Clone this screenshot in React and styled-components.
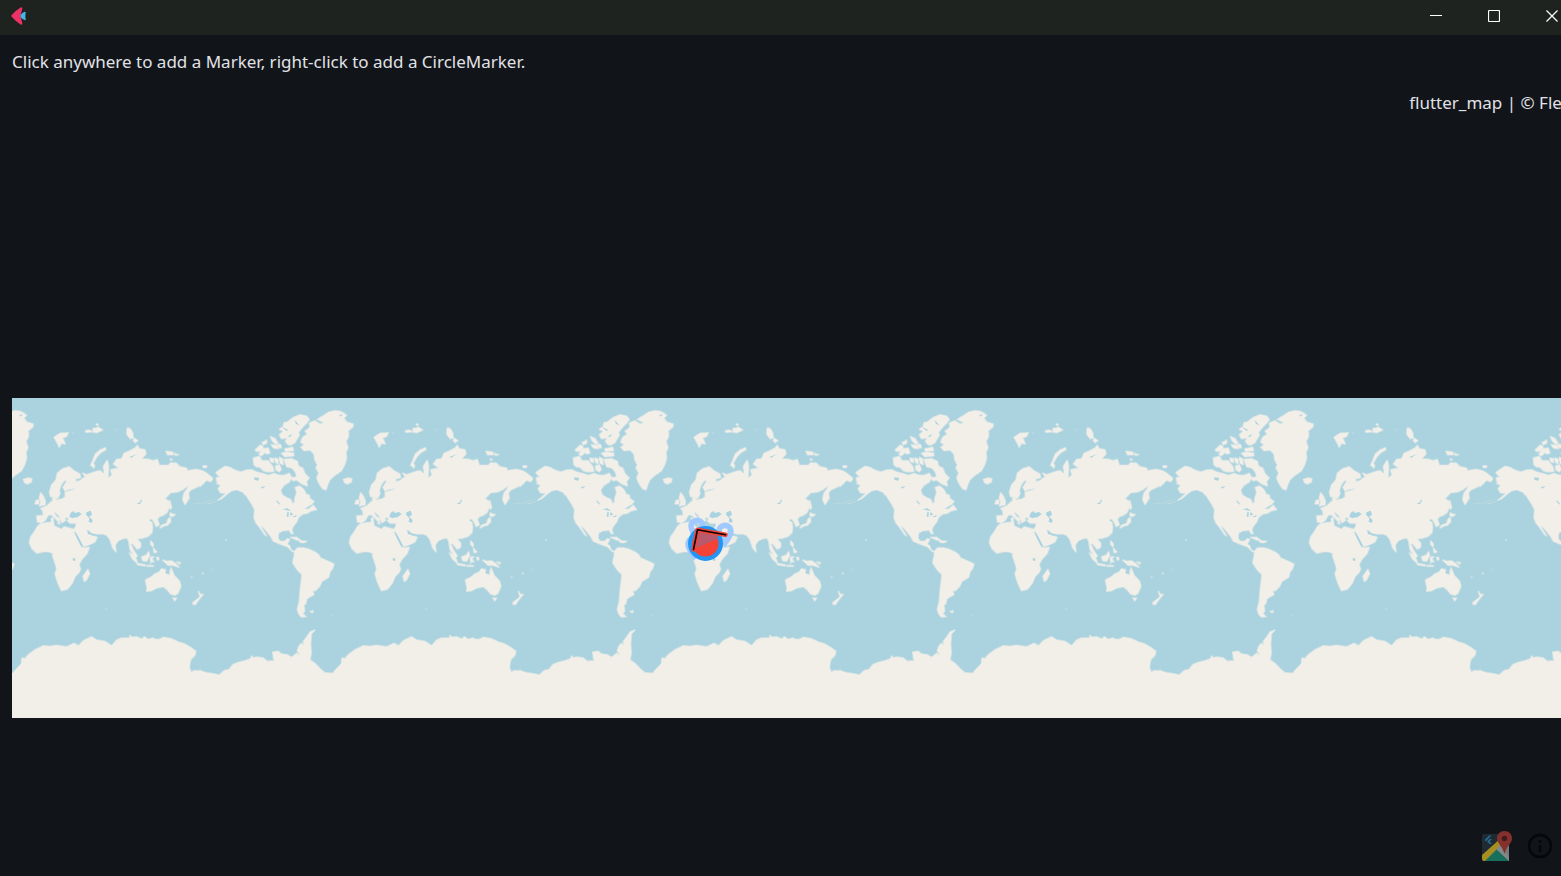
import React from 'react'
import styled, { createGlobalStyle } from 'styled-components'

const GlobalStyle = createGlobalStyle`
  * {
    box-sizing: border-box;
  }

  body {
    margin: 0;
    background: #111418;
    color: #e1e2e8;
    font-family: 'Noto Sans', 'Open Sans', sans-serif;
  }
`

const Window = styled.div`
  display: flex;
  flex-direction: column;
  min-height: 100vh;
  overflow: hidden;
`

const TitleBar = styled.header`
  display: flex;
  align-items: center;
  justify-content: space-between;
  height: 35px;
  padding-left: 10px;
  background: #1e231f;
`

const Logo = styled.svg`
  display: block;
  width: 18px;
  height: 20px;
  margin-bottom: 4px;
`

const WindowButtons = styled.div`
  display: flex;
  margin-right: -20px;
`

const WindowButton = styled.button`
  display: flex;
  align-items: center;
  justify-content: center;
  width: 58px;
  height: 35px;
  padding: 0 0 4px;
  border: 0;
  background: none;
  color: #fff;
`

const Content = styled.main`
  display: flex;
  flex: 1;
  flex-direction: column;
  padding: 12px 0 0 12px;
`

const Text = styled.p`
  margin: 0 0 12px;
  font-size: 17px;
  line-height: 29px;
  white-space: nowrap;
`

const Attribution = styled(Text)`
  align-self: flex-end;
  margin: 0 -7px 0 0;
`

const MapArea = styled.section`
  display: flex;
  flex: 1;
  flex-direction: column;
  justify-content: flex-end;
`

const MapCanvas = styled.svg`
  display: block;
  width: 100%;
  height: 320px;
  background: #aad3df;
`

const Sources = styled.footer`
  display: flex;
  align-items: flex-end;
  justify-content: flex-end;
  gap: 15px;
  height: 158px;
  padding: 0 8px 15px;
`

const SourceButton = styled.button`
  display: flex;
  padding: 0;
  border: 0;
  background: none;
  color: #050709;
`

const LAND = '#f2efe9'
const WATER = '#aad3df'
const WORLD_WIDTH = 320
const worlds = [-1, 0, 1, 2, 3, 4]

const americas = [
  'M50,222L64,212L75,205L90,208L104,216L122,222L140,216L155,215L170,222L185,226L205,232L222,226L238,232L252,232L268,226L275,238L268,252L252,262L242,276L246,290L262,300L272,304L278,318L284,312L285,298L290,285L286,268L300,264L312,275L318,288L328,292L330,302L342,310L336,318L322,326L312,332L325,334L340,322L350,335L335,338L322,346L308,348L296,358L290,372L278,388L276,396L279,408L272,405L268,396L250,398L236,404L234,420L240,430L254,430L262,422L269,424L262,438L270,445L272,455L285,462L276,460L262,446L240,438L220,430L212,415L196,395L182,380L188,395L200,414L194,410L180,390L168,375L162,360L164,335L155,318L140,295L128,282L110,275L95,278L82,288L65,302L54,306L62,300L78,286L62,285L54,272L62,262L50,256L58,248L48,240L62,236Z',
  'M284,460L292,450L308,449L325,453L345,462L356,470L362,480L385,490L402,498L398,512L390,522L386,538L366,550L360,564L348,577L338,580L342,590L330,596L320,604L318,616L312,622L314,640L308,646L318,656L304,657L296,648L292,634L298,610L300,580L306,530L292,516L278,494L282,476Z',
  'M375,50L385,43L405,38L420,40L430,44L440,52L432,60L440,72L460,78L458,88L445,98L446,115L438,130L444,148L438,165L440,180L434,200L425,218L405,232L390,245L384,258L378,276L368,272L358,258L350,240L356,225L348,210L352,200L344,185L342,168L330,156L312,158L302,148L312,140L302,132L308,118L322,108L315,100L330,88L328,75L345,68L360,78L372,74L352,64Z',
  'M262,72L280,58L300,50L320,54L328,64L320,76L308,88L296,102L298,112L284,135L270,142L262,138L256,130L262,120L244,122L238,110L250,100L238,94L250,84L252,74Z',
  'M255,152L278,148L281,158L255,160Z M244,166L262,162L281,166L281,174L254,176Z M211,115L226,122L234,135L226,138L216,128Z M186,134L200,126L200,136L190,140Z M166,155L180,142L188,144L190,152L205,150L210,165L200,168L194,164L184,174L176,168L184,160L168,160Z',
  'M160,180L178,175L186,188L205,188L218,205L222,220L205,222L190,218L180,208L168,206L162,200Z M210,180L222,183L220,194L211,190Z M224,180L236,184L233,198L226,192Z M238,178L248,182L250,200L240,196Z M226,204L238,200L244,214L238,222L228,216Z M214,140L230,142L236,152L220,150Z M232,138L242,140L244,150L234,148Z',
  'M252,184L275,182L292,190L296,205L308,210L316,228L328,240L320,250L322,264L306,258L290,246L278,248L274,240L290,236L286,222L276,210L260,206L256,196Z',
  'M430,244L445,240L456,242L454,252L442,258L434,254Z M272,418L290,418L304,428L290,426Z M300,428L320,430L312,434L298,432Z M0,217L20,226L38,240L32,250L22,244L10,256L0,266Z M10,204h9v4h-9Z M330,641l10,-3l-2,6Z',
]

const eurasia = [
  'M-2,284L4,262L18,245L22,225L38,212L58,206L72,218L90,228L92,240L77,242L78,252L90,248L105,236L98,225L110,230L125,225L140,220L150,218L163,228L160,205L172,186L176,205L174,240L186,232L182,215L206,210L190,198L200,184L215,182L222,166L240,158L255,150L262,142L268,152L285,155L288,168L275,182L295,184L310,188L322,184L328,202L355,202L362,194L380,196L390,206L410,210L412,218L440,214L465,222L475,235L488,245L480,250L465,245L458,258L440,268L422,276L415,286L418,300L405,320L398,305L402,285L412,272L415,262L400,274L382,282L362,284L345,302L358,310L360,325L350,345L340,352L328,356L322,364L328,380L319,386L312,372L305,362L296,366L306,374L308,388L306,404L295,415L280,420L262,422L272,436L272,448L262,454L248,437L242,438L250,455L262,474L256,480L240,455L236,428L230,420L218,422L205,428L196,440L198,462L188,450L180,425L170,412L160,408L140,408L125,405L114,395L110,400L125,412L142,418L135,432L118,440L100,446L90,430L80,410L75,400L72,404L85,425L98,450L118,448L112,466L95,485L87,500L92,512L88,523L75,536L67,556L52,574L34,578L22,551L15,528L20,511L12,486L8,474L8,466L-5,461L-20,461L-40,466L-55,451L-62,434L-58,416L-45,398L-38,386L-28,376L-10,374L10,371L13,384L35,394L42,386L72,394L78,384L78,376L60,376L52,368L58,360L46,358L46,368L36,374L26,352L16,343L12,345L20,356L30,362L28,372L20,366L6,352L-4,350L-15,368L-25,374L-38,372L-40,354L-20,352L-22,338L-28,331L-10,324L0,314L8,308L8,296L14,298L20,306L38,302L46,296L45,282L62,278L78,270L60,274L44,278L39,268L50,250L45,246L35,258L28,276L30,288L22,302L12,296L2,296Z',
  'M166,149L150,156L136,168L128,188L122,202L132,210L134,204L130,196L140,178L152,164L168,155Z M12,118L30,106L55,104L50,115L38,120L46,138L34,136L28,148L22,136Z M232,90L241,92L248,104L250,120L240,122L230,108Z M252,120L264,128L256,134L250,128Z M106,98L118,96L128,102L108,103Z M128,92L146,88L158,96L140,104L130,102Z M138,78l6,0l0,6Z M348,160L368,162L370,170L352,170Z M372,166L386,170L376,172Z M360,184l6,-1v4Z M460,204h9v4h-9Z M510,218L498,224L504,232L510,236Z M500,242h10v8h-10Z',
  'M360,308L365,330L360,334Z M360,345L368,348L376,350L366,356L360,352Z M361,358L362,372L352,382L342,384L330,390L334,382L350,376L354,364Z M-28,284L-20,294L-14,308L-14,320L-32,324L-28,312L-32,298Z M-42,308L-32,304L-34,318L-45,318Z M114,514L119,528L108,548L102,550L99,534Z M22,374l9,0l-3,5Z M4,360l6,0l0,12l-5,0Z',
]

const oceania = [
  'M58,98L70,106L80,120L82,130L68,118Z M80,130L105,134L108,138L84,135Z M95,110L108,106L116,95L119,107L110,124L98,122Z M121,112L132,110L126,116L132,126L124,124L122,130Z M122,62L130,72L129,80L122,74Z M130,84L141,96L132,98Z M158,120L170,124L184,122L198,131L208,142L188,136L174,136L166,128Z M140,112l6,0l0,8l-4,0Z M112,136l18,1l0,2l-18,0Z M200,126l12,2l-4,4Z',
  'M106,180L122,172L134,162L148,156L154,146L167,149L165,160L178,166L183,143L188,155L194,168L208,182L213,198L204,220L195,226L182,222L172,210L160,200L140,204L125,212L110,214L111,202Z M189,234L200,235L194,243Z M265,214L270,222L280,224L272,232L266,240L256,254L248,252L250,246L262,238L270,230Z',
]

const antarctica =
  'M0,818L20,824L40,827L58,831L72,818L88,814L98,800L112,794L135,788L152,782L154,774L160,779L172,777L190,780L205,792L208,788L222,790L218,762L235,760L245,768L262,770L275,778L290,766L300,772L292,758L296,746L304,736L312,742L310,730L322,714L330,702L345,696L334,708L332,740L334,765L330,786L345,796L362,814L375,824L398,826L412,810L424,798L426,780L434,782L445,770L465,755L490,743L510,745L530,742L560,746L582,736L596,743L610,728L635,716L650,726L675,730L695,743L710,726L725,720L748,720L750,712L755,718L770,716L785,723L793,716L805,724L820,720L825,724L838,724L850,718L875,722L895,732L915,738L935,750L948,760L945,772L932,785L928,810L935,824L940,818L962,818V960H0Z'

const lakes = [
  'M570,350L574,342L582,340L586,346L596,341L605,349L592,358L576,360L568,356Z',
  'M620,342L632,338L636,350L628,356L638,366L636,374L626,372L628,360L618,350Z',
  'M583,402L588,404L597,420L610,445L604,446L592,424Z',
  'M622,397L636,408L648,409L640,413L624,408Z',
  'M770,318L780,312L784,304L786,308L780,318Z',
  'M578,481h8v7h-7Z',
  'M162,238l16,2l-4,8l-10,-2Z M182,268l16,-4l-12,8Z M228,308l5,0l8,12l-5,-2Z M248,334l14,-3l12,8l-14,-2Z M262,342l4,0l0,14l-6,0Z M270,342l10,6l-8,6Z M276,356l16,-5l-6,6Z',
  'M242,84L264,96L260,99Z M284,66L298,82L288,78Z M262,116l14,-8l-4,8Z M418,52l10,-4l-6,8Z M748,177l22,-8l-16,10Z',
]

const pins = [
  { x: 682, y: 515 },
  { x: 710, y: 520 },
  { x: 679, y: 533 },
]

const MapPin = ({ x, y }) => (
  <g transform={`translate(${x} ${y}) scale(1.25)`}>
    <path
      d="M12 2C8.13 2 5 5.13 5 9c0 5.25 7 13 7 13s7-7.75 7-13c0-3.87-3.13-7-7-7zm0 9.500a2.500 2.500 0 0 1 0-5 2.500 2.500 0 0 1 0 5z"
      fill="#a0c9ff"
    />
  </g>
)

const Coastline = () => (
  <>
    {americas.map((d, key) => <path key={key} d={d} />)}
    <g transform="translate(510 0)">
      {eurasia.map((d, key) => <path key={key} d={d} />)}
    </g>
    <g transform="translate(690 366)">
      {oceania.map((d, key) => <path key={key} d={d} />)}
    </g>
    <path d={antarctica} />
  </>
)

const WorldMap = () => (
  <MapCanvas role="img" aria-label="World map">
    <defs>
      <g id="coastline">
        <Coastline />
      </g>
      <g id="world" strokeLinejoin="round">
        {/* pale shallows round the coast */}
        <use href="#coastline" fill="none" stroke={LAND} strokeWidth="6" strokeOpacity="0.35" />
        <use href="#coastline" fill={LAND} stroke={LAND} strokeWidth="1" />
        {lakes.map((d, key) => <path key={key} d={d} fill={WATER} />)}
        <path d="M20,318Q48,314 64,302M404,302" fill="none" stroke={LAND} strokeWidth="3" strokeOpacity="0.35" />
        <path d="M938,318Q968,318 1000,304" fill="none" stroke={LAND} strokeWidth="2" strokeOpacity="0.35" />
        <g fill={LAND} opacity="0.5">
          <circle cx="78" cy="425" r="3" />
          <circle cx="38" cy="516" r="2" />
          <circle cx="8" cy="527" r="3" />
          <circle cx="395" cy="653" r="2" />
          <circle cx="679" cy="632" r="2" />
          <circle cx="935" cy="537" r="3" />
          <circle cx="969" cy="526" r="3" />
          <circle cx="580" cy="104" r="2" />
          <circle cx="706" cy="95" r="2" />
        </g>
      </g>
    </defs>
    {worlds.map(n => (
      <use key={n} href="#world" transform={`translate(${188 + n * WORLD_WIDTH} 0) scale(0.33333)`} />
    ))}
    {/* overlay layers share the window's coordinates */}
    <g transform="translate(-12 -398)">
      {pins.map((pin, key) => <MapPin key={key} {...pin} />)}
      <circle cx="705.500" cy="543.500" r="15.300" fill="#f44336" stroke="#2196f3" strokeWidth="4.400" />
      <path d="M697.500 530L718 536L717 539L694 549Z" fill="#b85a6c" />
      <g fill="none" strokeLinecap="round" strokeLinejoin="round">
        <path d="M725.500 534.700L697.500 529.700L693.500 549.500" stroke="#f44336" strokeWidth="4.600" />
        <path d="M725.500 534.700L697.500 529.700L693.500 549.500" stroke="#000" strokeWidth="1.600" />
      </g>
    </g>
  </MapCanvas>
)

const App = () => (
  <>
    <GlobalStyle />
    <Window>
      <TitleBar>
        <Logo viewBox="0 0 18 20" aria-hidden="true">
          <path d="M11 1.200Q13 1 12 4L10.500 10L12 16Q13 19 11 18.700Q6 16 1.500 10.600Q1 10 1.500 9.300Q6 4 11 1.200Z" fill="#ee3167" />
          <path d="M10 10L12 7.200Q15.500 5.200 15.700 6Q15 10 15.700 14Q15.500 14.800 12 12.800Z" fill="#45b5e5" />
        </Logo>
        <WindowButtons>
          <WindowButton type="button" aria-label="Minimize">
            <svg width="12" height="12" stroke="currentColor">
              <path d="M0 5.500H12" />
            </svg>
          </WindowButton>
          <WindowButton type="button" aria-label="Maximize">
            <svg width="12" height="12" fill="none" stroke="currentColor">
              <rect x="0.500" y="0.500" width="11" height="11" rx="1" strokeWidth="1.200" />
            </svg>
          </WindowButton>
          <WindowButton type="button" aria-label="Close">
            <svg width="12" height="12" stroke="currentColor" strokeWidth="1.200">
              <path d="M0.500 0.500L11.500 11.500M11.500 0.500L0.500 11.500" />
            </svg>
          </WindowButton>
        </WindowButtons>
      </TitleBar>
      <Content>
        <Text>Click anywhere to add a Marker, right-click to add a CircleMarker.</Text>
        <Attribution>flutter_map | © Flet</Attribution>
        <MapArea>
          <WorldMap />
        </MapArea>
        <Sources>
          <SourceButton type="button" aria-label="flutter_map">
            <svg width="30" height="30" viewBox="0 1 30 30">
              <rect y="4" width="27" height="27" rx="2" fill="#202a33" />
              <path d="M20 10H25Q27 10 27 12V31H25L15 20Z" fill="#777a7b" />
              <path d="M1 31L14.500 18L27 31Z" fill="#176f5c" />
              <path d="M0 25L19 8L22 12L3 31H2Q0 31 0 29Z" fill="#a88d20" />
              <path d="M14 19L18 15L27 27V31Z" fill="#858788" />
              <path d="M2.500 10L7 5.500H9.500L4 11.300Z M5 11.500L7.500 9H10L7.500 11.500L10 14H7.500Z" fill="#24698c" />
              <path d="M22.500 1C18 1 15 4.200 15 8.500C15 13 20.500 16 22.500 24C24.500 16 30 13 30 8.500C30 4.200 27 1 22.500 1Z" fill="#84302d" />
              <circle cx="22.500" cy="8.500" r="2.700" fill="#401b1b" />
            </svg>
          </SourceButton>
          <SourceButton type="button" aria-label="Attributions">
            <svg width="26" height="30" viewBox="0 0 26 30" fill="none" stroke="currentColor" strokeWidth="2.400">
              <circle cx="13" cy="15" r="11" />
              <path d="M13 14V21M13 9V11.500" />
            </svg>
          </SourceButton>
        </Sources>
      </Content>
    </Window>
  </>
)

export default App
